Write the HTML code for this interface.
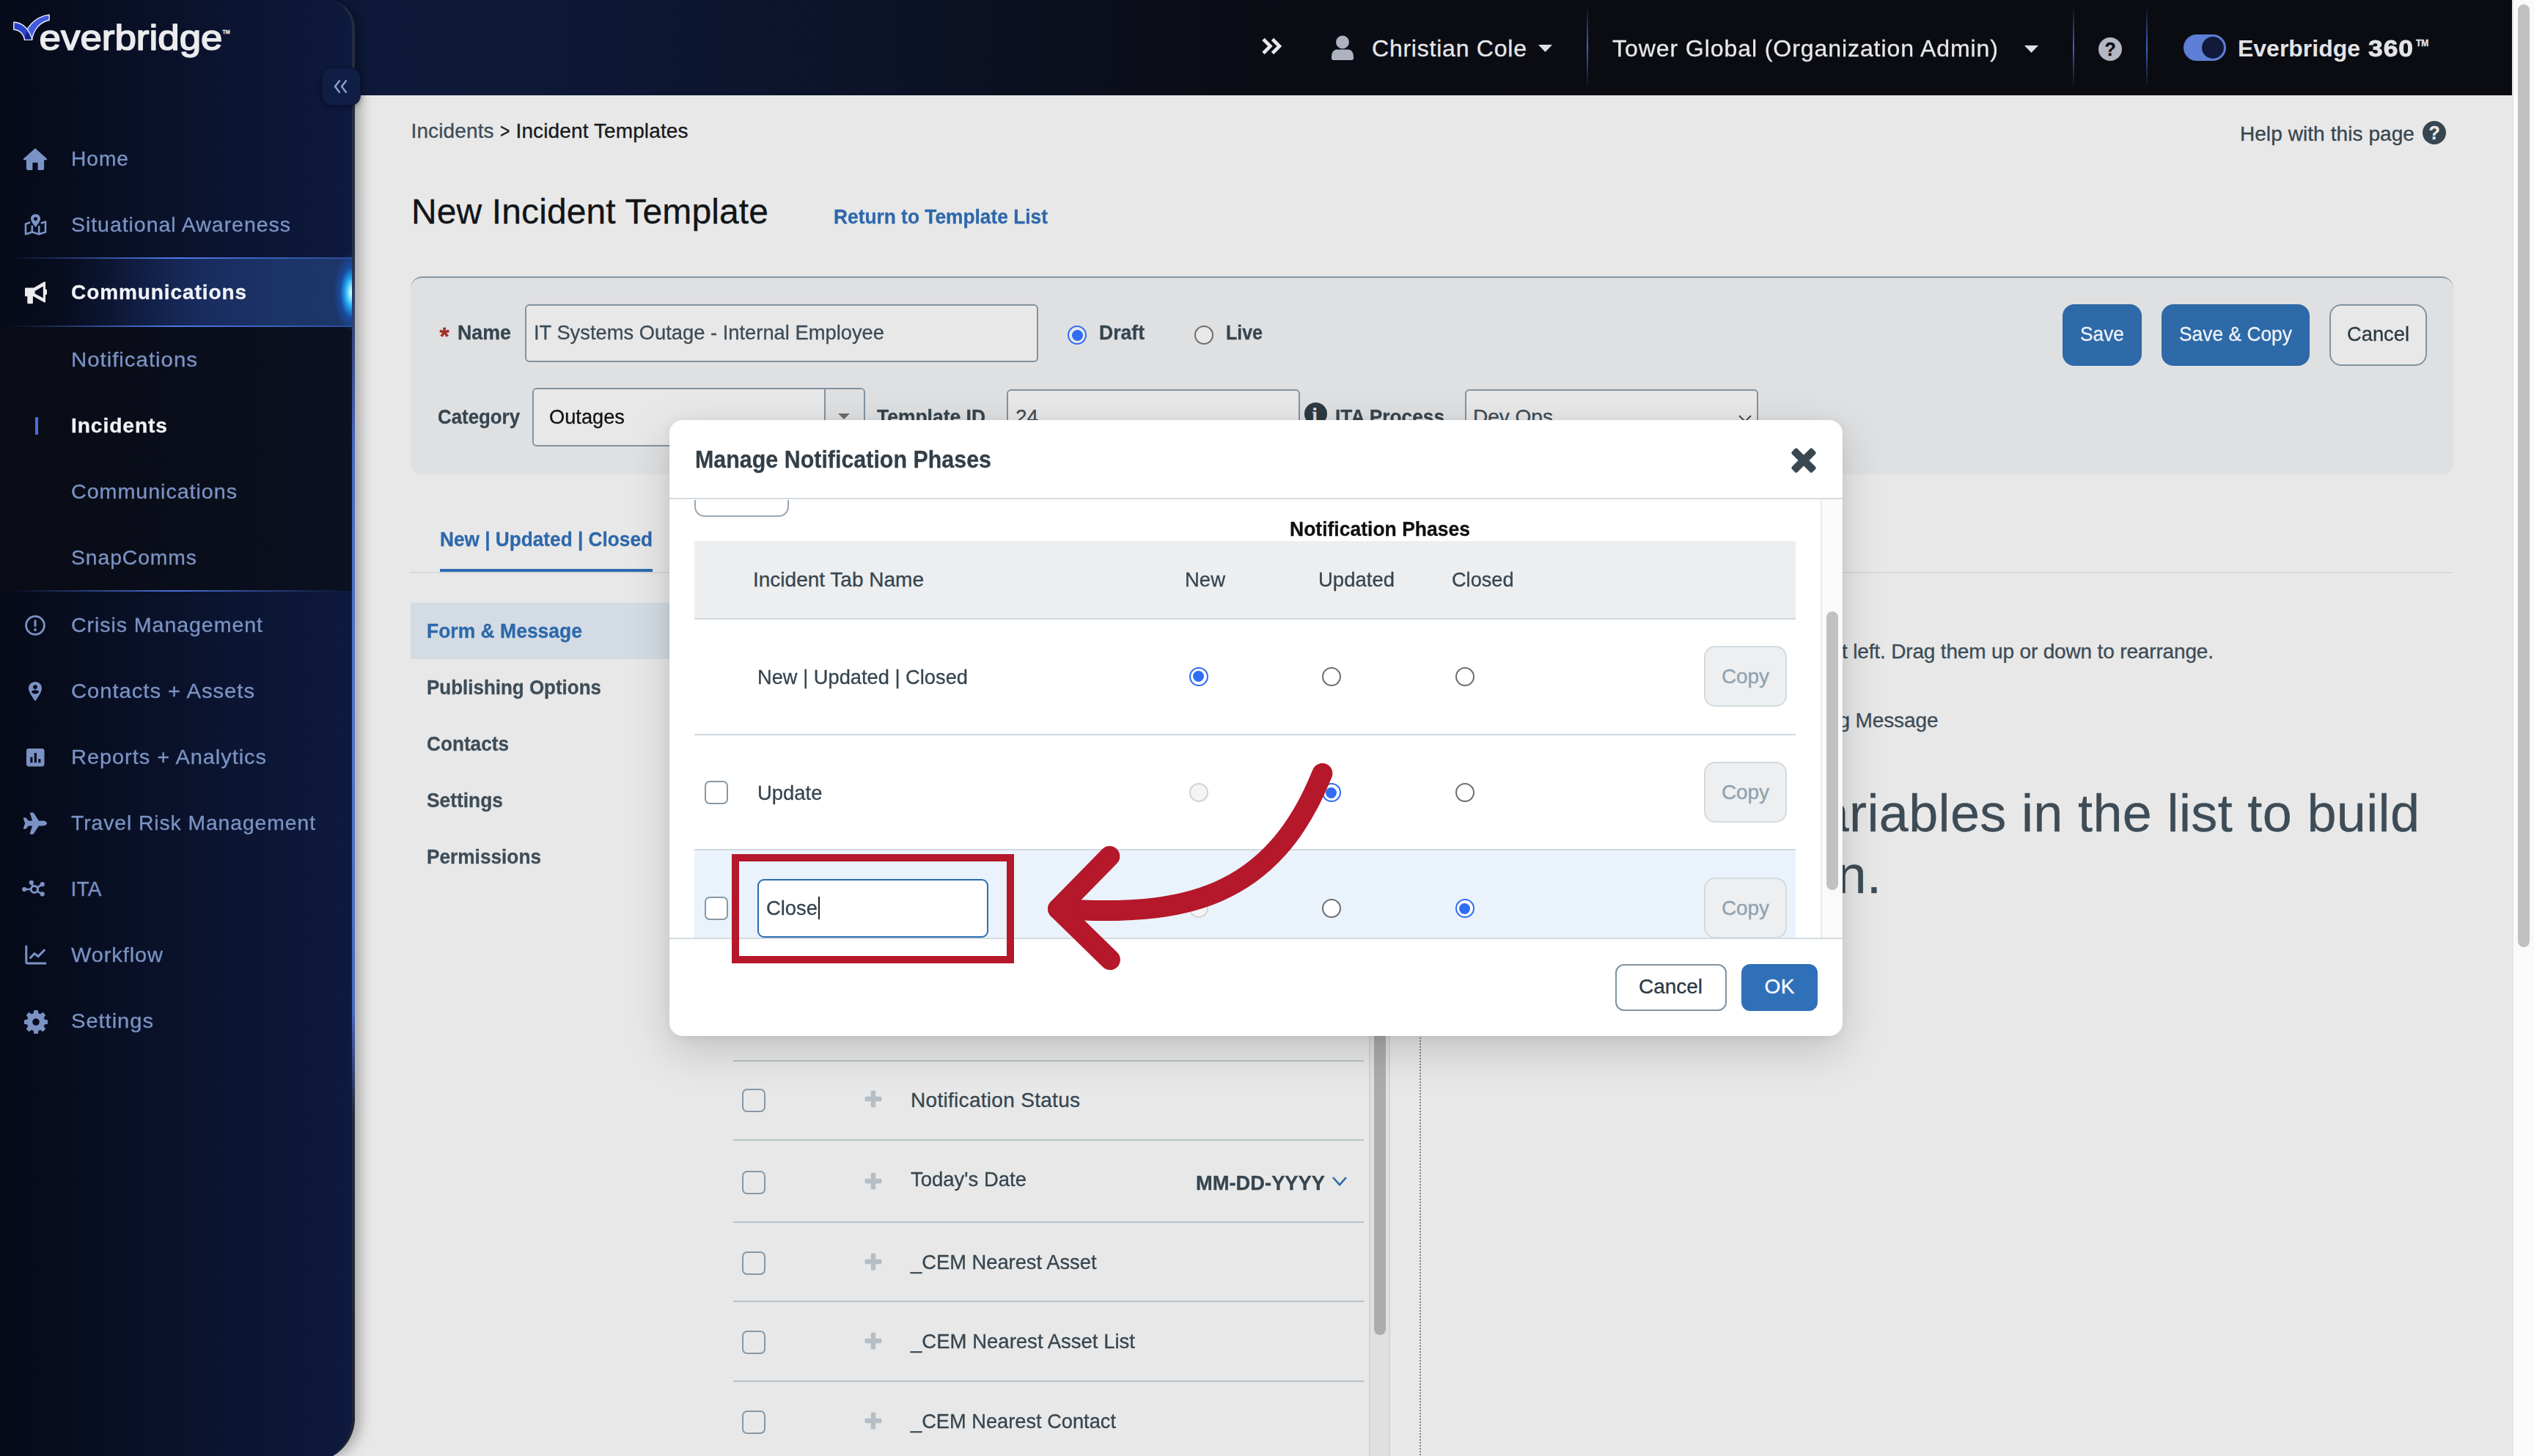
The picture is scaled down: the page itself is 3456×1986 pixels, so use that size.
<!DOCTYPE html>
<html lang="en"><head><meta charset="utf-8"><title>Incident Templates</title><style>
html{font-size:calc(100vw / 345.6);}
body{margin:0;background:#e8e8e8;overflow:hidden;font-family:"Liberation Sans",sans-serif;}
#root{position:relative;width:345.6rem;height:198.6rem;overflow:hidden;background:#e8e8e8;}
#root div,#root span,#root svg{position:absolute;box-sizing:border-box;}
#root span{white-space:nowrap;-webkit-text-stroke:0.03rem currentColor;}
</style></head><body><div id="root">
<span style="left: 56.05rem; top: 16.48rem; font-size: 2.8rem; line-height: 2.8rem; color: rgb(61, 76, 87); font-weight: 400; letter-spacing: 0.012rem;">Incidents</span>
<span style="left: 68.2rem; top: 16.48rem; font-size: 2.8rem; line-height: 2.8rem; color: rgb(22, 25, 28); font-weight: 400; transform-origin: 0rem 50%; transform: scaleX(0.8252);">&gt;</span>
<span style="left: 70.35rem; top: 16.48rem; font-size: 2.8rem; line-height: 2.8rem; color: rgb(22, 25, 28); font-weight: 400; letter-spacing: 0.012rem;">Incident Templates</span>
<span style="left: 305.49rem; top: 16.93rem; font-size: 2.8rem; line-height: 2.8rem; color: rgb(54, 69, 79); font-weight: 400; letter-spacing: 0.008rem;">Help with this page</span>
<div style="left:330.4rem;top:16.5rem;width:3.2rem;height:3.2rem;border-radius:50%;background:#36454f;"></div>
<span style="left:331.25rem;top:16.88rem;font-size:2.5rem;line-height:2.5rem;color:#e8e8e8;font-weight:700;">?</span>
<span style="left: 56.1rem; top: 26.49rem; font-size: 4.8rem; line-height: 4.8rem; color: rgb(17, 20, 23); font-weight: 400; letter-spacing: 0.011rem;">New Incident Template</span>
<span style="left: 113.7rem; top: 28.18rem; font-size: 2.8rem; line-height: 2.8rem; color: rgb(45, 104, 172); font-weight: 700; transform-origin: 0rem 50%; transform: scaleX(0.94);">Return to Template List</span>
<div style="left:56rem;top:37.7rem;width:278.6rem;height:27rem;background:#dfe0e2;border-radius:1.6rem;border-top:0.2rem solid #8596a3;"></div>
<span style="left:59.95rem;top:44.12rem;font-size:3.4rem;line-height:3.4rem;color:#a12a2a;font-weight:700;">*</span>
<span style="left: 62.4rem; top: 44.03rem; font-size: 2.8rem; line-height: 2.8rem; color: rgb(54, 69, 79); font-weight: 700; transform-origin: 0rem 50%; transform: scaleX(0.9572);">Name</span>
<div style="left:71.6rem;top:41.5rem;width:70rem;height:7.9rem;border:0.2rem solid #8293a0;border-radius:0.6rem;background:#e8e8e8;"></div>
<span style="left: 72.8rem; top: 44.03rem; font-size: 2.8rem; line-height: 2.8rem; color: rgb(61, 76, 87); font-weight: 400; transform-origin: 0rem 50%; transform: scaleX(0.9761);">IT Systems Outage - Internal Employee</span>
<div style="left:145.6rem;top:44.4rem;width:2.6rem;height:2.6rem;border-radius:50%;border:0.26rem solid #2f6df2;background:#e8e8e8;"></div>
<div style="left:146.15rem;top:44.95rem;width:1.5rem;height:1.5rem;border-radius:50%;background:#2f6df2;"></div>
<span style="left: 149.9rem; top: 44.03rem; font-size: 2.8rem; line-height: 2.8rem; color: rgb(54, 69, 79); font-weight: 700; transform-origin: 0rem 50%; transform: scaleX(0.9488);">Draft</span>
<div style="left:162.85rem;top:44.4rem;width:2.6rem;height:2.6rem;border-radius:50%;border:0.22rem solid #6e6e6e;background:#e8e8e8;"></div>
<span style="left: 167.2rem; top: 44.03rem; font-size: 2.8rem; line-height: 2.8rem; color: rgb(54, 69, 79); font-weight: 700; transform-origin: 0rem 50%; transform: scaleX(0.8924);">Live</span>
<div style="left:281.3rem;top:41.5rem;width:10.8rem;height:8.4rem;background:#2e69a8;border-radius:1.6rem;"></div>
<span style="left: 283.65rem; top: 44.23rem; font-size: 2.8rem; line-height: 2.8rem; color: rgb(238, 243, 248); font-weight: 400; transform-origin: 0rem 50%; transform: scaleX(0.94);">Save</span>
<div style="left:294.8rem;top:41.5rem;width:20.2rem;height:8.4rem;background:#2e69a8;border-radius:1.6rem;"></div>
<span style="left: 297.15rem; top: 44.23rem; font-size: 2.8rem; line-height: 2.8rem; color: rgb(238, 243, 248); font-weight: 400; transform-origin: 0rem 50%; transform: scaleX(0.9423);">Save &amp; Copy</span>
<div style="left:317.7rem;top:41.5rem;width:13.3rem;height:8.4rem;background:#e8e8e8;border:0.2rem solid #8293a0;border-radius:1.6rem;"></div>
<span style="left: 320.1rem; top: 44.23rem; font-size: 2.8rem; line-height: 2.8rem; color: rgb(43, 57, 66); font-weight: 400; transform-origin: 0rem 50%; transform: scaleX(0.9751);">Cancel</span>
<span style="left: 59.65rem; top: 55.53rem; font-size: 2.8rem; line-height: 2.8rem; color: rgb(54, 69, 79); font-weight: 700; transform-origin: 0rem 50%; transform: scaleX(0.9228);">Category</span>
<div style="left:72.6rem;top:52.9rem;width:45.4rem;height:8rem;border:0.2rem solid #8293a0;border-radius:0.6rem;background:#e8e8e8;"></div>
<div style="left:112.4rem;top:53.1rem;width:0.2rem;height:7.6rem;background:#8293a0;"></div>
<div style="left:112.6rem;top:53.1rem;width:5.2rem;height:7.6rem;background:#dfe0e2;border-radius:0 0.4rem 0.4rem 0;"></div>
<svg style="left:114.3rem;top:56.4rem;width:1.6rem;height:0.8rem;" viewBox="0 0 16 8"><path d="M0 0 L16 0 L8 8 Z" fill="#6b6b6b"></path></svg>
<span style="left: 74.85rem; top: 55.53rem; font-size: 2.8rem; line-height: 2.8rem; color: rgb(17, 17, 17); font-weight: 400; transform-origin: 0rem 50%; transform: scaleX(0.973);">Outages</span>
<span style="left: 119.6rem; top: 55.53rem; font-size: 2.8rem; line-height: 2.8rem; color: rgb(54, 69, 79); font-weight: 700; transform-origin: 0rem 50%; transform: scaleX(0.9449);">Template ID</span>
<div style="left:137.3rem;top:53.1rem;width:40rem;height:8rem;border:0.2rem solid #8293a0;border-radius:0.6rem;background:#e8e8e8;"></div>
<span style="left:138.5rem;top:55.53rem;font-size:2.8rem;line-height:2.8rem;color:#3d4c57;font-weight:400;">24</span>
<div style="left:177.9rem;top:54.9rem;width:3.1rem;height:3.1rem;border-radius:50%;background:#2b3942;"></div>
<span style="left:178.95rem;top:55.3rem;font-size:2.6rem;line-height:2.6rem;color:#dfe0e2;font-weight:700;font-family:'Liberation Serif',serif;">i</span>
<span style="left: 182.1rem; top: 55.53rem; font-size: 2.8rem; line-height: 2.8rem; color: rgb(54, 69, 79); font-weight: 700; transform-origin: 0rem 50%; transform: scaleX(0.9387);">ITA Process</span>
<div style="left:199.8rem;top:53.1rem;width:40rem;height:8rem;border:0.2rem solid #8293a0;border-radius:0.6rem;background:#e8e8e8;"></div>
<span style="left:200.9rem;top:55.53rem;font-size:2.8rem;line-height:2.8rem;color:#3d4c57;font-weight:400;">Dev Ops</span>
<svg style="left:237.1rem;top:56.6rem;width:1.8rem;height:1rem;" viewBox="0 0 18 10"><path d="M1 1 L9 9 L17 1" fill="none" stroke="#3d4c57" stroke-width="2"></path></svg>
<span style="left: 60rem; top: 72.23rem; font-size: 2.8rem; line-height: 2.8rem; color: rgb(45, 104, 172); font-weight: 700; transform-origin: 0rem 50%; transform: scaleX(0.9363);">New | Updated | Closed</span>
<div style="left:56rem;top:78rem;width:278.5rem;height:0.2rem;background:#d8d9da;"></div>
<div style="left:60rem;top:77.6rem;width:29rem;height:0.44rem;background:#2e6bb3;"></div>
<div style="left:56rem;top:82.2rem;width:40rem;height:7.7rem;background:#d3dce4;"></div>
<span style="left: 58.2rem; top: 84.73rem; font-size: 2.8rem; line-height: 2.8rem; color: rgb(45, 104, 172); font-weight: 700; transform-origin: 0rem 50%; transform: scaleX(0.9461);">Form &amp; Message</span>
<span style="left: 58.2rem; top: 92.43rem; font-size: 2.8rem; line-height: 2.8rem; color: rgb(62, 77, 88); font-weight: 700; transform-origin: 0rem 50%; transform: scaleX(0.9273);">Publishing Options</span>
<span style="left: 58.2rem; top: 100.13rem; font-size: 2.8rem; line-height: 2.8rem; color: rgb(62, 77, 88); font-weight: 700; transform-origin: 0rem 50%; transform: scaleX(0.9349);">Contacts</span>
<span style="left: 58.2rem; top: 107.83rem; font-size: 2.8rem; line-height: 2.8rem; color: rgb(62, 77, 88); font-weight: 700; transform-origin: 0rem 50%; transform: scaleX(0.9414);">Settings</span>
<span style="left: 58.2rem; top: 115.53rem; font-size: 2.8rem; line-height: 2.8rem; color: rgb(62, 77, 88); font-weight: 700; transform-origin: 0rem 50%; transform: scaleX(0.9368);">Permissions</span>
<span style="right: 43.7rem; top: 87.48rem; font-size: 2.8rem; line-height: 2.8rem; color: rgb(61, 76, 87); font-weight: 400; letter-spacing: -0.016rem; margin-right: 0.016rem;">Select variables from the list at left. Drag them up or down to rearrange.</span>
<span style="right: 81.25rem; top: 96.93rem; font-size: 2.8rem; line-height: 2.8rem; color: rgb(61, 76, 87); font-weight: 400; letter-spacing: -0.011rem; margin-right: 0.011rem;">Outgoing Message</span>
<span style="right: 15.6rem; top: 107.31rem; font-size: 7.2rem; line-height: 7.2rem; color: rgb(61, 76, 87); font-weight: 400; letter-spacing: 0.035rem; margin-right: -0.035rem;">Select variables in the list to build</span>
<span style="right:89rem;top:115.62rem;font-size:7.3rem;line-height:7.3rem;color:#3d4c57;">your notification.</span>
<div style="left:100rem;top:133.8rem;width:86rem;height:0.2rem;background:#b8c1c9;"></div>
<div style="left:100rem;top:144.6rem;width:86rem;height:0.2rem;background:#b8c1c9;"></div>
<div style="left:100rem;top:155.4rem;width:86rem;height:0.2rem;background:#b8c1c9;"></div>
<div style="left:100rem;top:166.6rem;width:86rem;height:0.2rem;background:#b8c1c9;"></div>
<div style="left:100rem;top:177.4rem;width:86rem;height:0.2rem;background:#b8c1c9;"></div>
<div style="left:100rem;top:188.3rem;width:86rem;height:0.2rem;background:#b8c1c9;"></div>
<div style="left:101.2rem;top:148.5rem;width:3.2rem;height:3.2rem;border:0.2rem solid #8798a6;border-radius:0.7rem;background:#e8e8e8;"></div>
<svg style="left:117.85rem;top:148.7rem;width:2.4rem;height:2.4rem;" viewBox="0 0 24 24"><g fill="#b3bec7"><rect x="8.8" y="0.5" width="6.4" height="23" rx="1.6"></rect><rect x="0.5" y="8.8" width="23" height="6.4" rx="1.6"></rect></g></svg>
<span style="left: 124.2rem; top: 148.68rem; font-size: 2.8rem; line-height: 2.8rem; color: rgb(54, 69, 79); font-weight: 400; letter-spacing: 0.03rem;">Notification Status</span>
<div style="left:101.2rem;top:159.65rem;width:3.2rem;height:3.2rem;border:0.2rem solid #8798a6;border-radius:0.7rem;background:#e8e8e8;"></div>
<svg style="left:117.85rem;top:159.85rem;width:2.4rem;height:2.4rem;" viewBox="0 0 24 24"><g fill="#b3bec7"><rect x="8.8" y="0.5" width="6.4" height="23" rx="1.6"></rect><rect x="0.5" y="8.8" width="23" height="6.4" rx="1.6"></rect></g></svg>
<span style="left: 124.2rem; top: 159.53rem; font-size: 2.8rem; line-height: 2.8rem; color: rgb(54, 69, 79); font-weight: 400; transform-origin: 0rem 50%; transform: scaleX(0.9814);">Today's Date</span>
<div style="left:101.2rem;top:170.7rem;width:3.2rem;height:3.2rem;border:0.2rem solid #8798a6;border-radius:0.7rem;background:#e8e8e8;"></div>
<svg style="left:117.85rem;top:170.9rem;width:2.4rem;height:2.4rem;" viewBox="0 0 24 24"><g fill="#b3bec7"><rect x="8.8" y="0.5" width="6.4" height="23" rx="1.6"></rect><rect x="0.5" y="8.8" width="23" height="6.4" rx="1.6"></rect></g></svg>
<span style="left: 124.2rem; top: 170.83rem; font-size: 2.8rem; line-height: 2.8rem; color: rgb(54, 69, 79); font-weight: 400; transform-origin: 0rem 50%; transform: scaleX(0.9755);">_CEM Nearest Asset</span>
<div style="left:101.2rem;top:181.45rem;width:3.2rem;height:3.2rem;border:0.2rem solid #8798a6;border-radius:0.7rem;background:#e8e8e8;"></div>
<svg style="left:117.85rem;top:181.65rem;width:2.4rem;height:2.4rem;" viewBox="0 0 24 24"><g fill="#b3bec7"><rect x="8.8" y="0.5" width="6.4" height="23" rx="1.6"></rect><rect x="0.5" y="8.8" width="23" height="6.4" rx="1.6"></rect></g></svg>
<span style="left: 124.2rem; top: 181.63rem; font-size: 2.8rem; line-height: 2.8rem; color: rgb(54, 69, 79); font-weight: 400; transform-origin: 0rem 50%; transform: scaleX(0.9832);">_CEM Nearest Asset List</span>
<div style="left:101.2rem;top:192.4rem;width:3.2rem;height:3.2rem;border:0.2rem solid #8798a6;border-radius:0.7rem;background:#e8e8e8;"></div>
<svg style="left:117.85rem;top:192.6rem;width:2.4rem;height:2.4rem;" viewBox="0 0 24 24"><g fill="#b3bec7"><rect x="8.8" y="0.5" width="6.4" height="23" rx="1.6"></rect><rect x="0.5" y="8.8" width="23" height="6.4" rx="1.6"></rect></g></svg>
<span style="left: 124.2rem; top: 192.5rem; font-size: 2.8rem; line-height: 2.8rem; color: rgb(54, 69, 79); font-weight: 400; transform-origin: 0rem 50%; transform: scaleX(0.9726);">_CEM Nearest Contact</span>
<span style="left: 163.1rem; top: 160rem; font-size: 2.8rem; line-height: 2.8rem; color: rgb(54, 69, 79); font-weight: 700; transform-origin: 0rem 50%; transform: scaleX(0.9753);">MM-DD-YYYY</span>
<svg style="left:181.7rem;top:160.5rem;width:2rem;height:1.3rem;" viewBox="0 0 20 13"><path d="M1 1 L10 11 L19 1" fill="none" stroke="#2d68ac" stroke-width="2.6"></path></svg>
<div style="left:186.7rem;top:130rem;width:2.9rem;height:70rem;background:#e0e0e0;border-left:0.2rem solid #d4d4d4;border-right:0.2rem solid #d4d4d4;"></div>
<div style="left:187.4rem;top:130rem;width:1.6rem;height:52.1rem;background:#acacac;border-radius:0.8rem;"></div>
<div style="left:193.6rem;top:130rem;width:0rem;height:70rem;border-left:0.2rem dotted #7a848c;"></div>
<div style="left:0rem;top:0rem;width:342.6rem;height:13rem;background:linear-gradient(90deg,#0e1a3c 0rem,#0e1938 70rem,#0c1226 125rem,#0b0d16 165rem,#0b0c12 220rem);"></div>
<div style="left:342.6rem;top:0rem;width:3rem;height:198.6rem;background:#fafafa;border-left:0.2rem solid #e4e4e4;"></div>
<div style="left:343.4rem;top:0.6rem;width:1.6rem;height:128.6rem;background:#c1c1c1;border-radius:0.8rem;"></div>
<svg style="left:172rem;top:5.1rem;width:3rem;height:2.4rem;" viewBox="0 0 30 24"><path d="M3 2.5 L12.5 12 L3 21.5 M15.5 2.5 L25 12 L15.5 21.5" fill="none" stroke="#e9e9ec" stroke-width="4.6" stroke-linejoin="miter"></path></svg>
<svg style="left:181.6rem;top:4.8rem;width:3rem;height:3.4rem;" viewBox="0 0 30 34"><circle cx="15" cy="9.5" r="9" fill="#aeb3c0"></circle><path d="M0 30 C0 22 4 19.5 8 19.5 L22 19.5 C26 19.5 30 22 30 30 L30 31.5 C30 33 29 34 27.5 34 L2.5 34 C1 34 0 33 0 31.5 Z" fill="#aeb3c0"></path></svg>
<span style="left: 187.1rem; top: 5.04rem; font-size: 3.2rem; line-height: 3.2rem; color: rgb(230, 231, 234); font-weight: 400; letter-spacing: 0.077rem;">Christian Cole</span>
<svg style="left:209.8rem;top:6.1rem;width:1.9rem;height:1rem;" viewBox="0 0 19 10"><path d="M0 0 L19 0 L9.5 10 Z" fill="#dfe0e4"></path></svg>
<div style="left:216.4rem;top:0.8rem;width:0.2rem;height:11.2rem;background:linear-gradient(180deg,rgba(58,95,192,0),#3f63c4 50%,rgba(58,95,192,0));"></div>
<span style="left: 219.9rem; top: 4.99rem; font-size: 3.2rem; line-height: 3.2rem; color: rgb(230, 231, 234); font-weight: 400; letter-spacing: 0.09rem; transform-origin: 0rem 50%; transform: scaleX(1.0019);">Tower Global (Organization Admin)</span>
<svg style="left:276.1rem;top:6.2rem;width:1.9rem;height:1rem;" viewBox="0 0 19 10"><path d="M0 0 L19 0 L9.5 10 Z" fill="#dfe0e4"></path></svg>
<div style="left:282.7rem;top:0.8rem;width:0.2rem;height:11.2rem;background:linear-gradient(180deg,rgba(58,95,192,0),#3f63c4 50%,rgba(58,95,192,0));"></div>
<div style="left:286.2rem;top:5.1rem;width:3.2rem;height:3.2rem;border-radius:50%;background:#b3b7c3;"></div>
<span style="left:287.05rem;top:5.48rem;font-size:2.5rem;line-height:2.5rem;color:#0b0c12;font-weight:700;">?</span>
<div style="left:292.7rem;top:0.8rem;width:0.2rem;height:11.2rem;background:linear-gradient(180deg,rgba(58,95,192,0),#3f63c4 50%,rgba(58,95,192,0));"></div>
<div style="left:297.8rem;top:4.7rem;width:5.8rem;height:3.6rem;background:#5e7fd6;border-radius:1.8rem;"></div>
<div style="left:300.3rem;top:5rem;width:3rem;height:3rem;background:#111a3a;border-radius:50%;"></div>
<span style="left: 305.2rem; top: 5.04rem; font-size: 3.2rem; line-height: 3.2rem; color: rgb(227, 228, 232); font-weight: 700; -webkit-text-stroke: 0rem; letter-spacing: -0.002rem;">Everbridge</span>
<span style="left: 323rem; top: 5.04rem; font-size: 3.2rem; line-height: 3.2rem; color: rgb(227, 228, 232); font-weight: 700; -webkit-text-stroke: 0.09rem currentcolor; letter-spacing: 0.09rem; transform-origin: 0rem 50%; transform: scaleX(1.1053);">360</span>
<span style="left:329.5rem;top:5.28rem;font-size:1.2rem;line-height:1.2rem;color:#e3e4e8;font-weight:700;">TM</span>
<div style="left:0rem;top:0rem;width:48.4rem;height:199.4rem;background:linear-gradient(90deg,#060a18 0%,#0e1a3e 100%);border-radius:0 3.8rem 6rem 0;box-shadow:0.8rem 0 1.8rem rgba(0,0,0,.28);"></div>
<div style="left:0rem;top:0rem;width:48.4rem;height:199.4rem;border-radius:0 3.8rem 6rem 0;border-right:0.4rem solid transparent;background:linear-gradient(180deg,#252c3c 0%,#262e44 17%,#4a68c4 31%,#5673cc 50%,#4a68c4 69%,#252c40 76%,#20242e 100%) border-box;-webkit-mask:linear-gradient(#000 0 0) padding-box,linear-gradient(#000 0 0);-webkit-mask-composite:xor;mask-composite:exclude;"></div>
<div style="left:0rem;top:44.5rem;width:48rem;height:36.1rem;background:linear-gradient(90deg,#090c15 0%,#0a0e1b 60%,#0b1122 100%);"></div>
<div style="left:0rem;top:80.5rem;width:48rem;height:0.2rem;background:linear-gradient(90deg,rgba(74,120,224,0) 2%,#4a70d8 50%,rgba(74,120,224,0) 98%);"></div>
<div style="left:0rem;top:35.2rem;width:48rem;height:9.3rem;background:linear-gradient(90deg,rgba(26,47,102,0) 0%,rgba(26,47,102,0) 18%,rgba(26,47,102,.2) 30%,rgba(28,50,108,.78) 56%,#1c3467 80%,#1e3769 100%);"></div>
<div style="left:0rem;top:35.1rem;width:48rem;height:0.2rem;background:linear-gradient(90deg,rgba(74,120,224,0) 2%,#4f7ae6 50%,#2c4a96 100%);"></div>
<div style="left:0rem;top:44.4rem;width:48rem;height:0.2rem;background:linear-gradient(90deg,rgba(74,120,224,0) 2%,#4f7ae6 50%,#2c4a96 100%);"></div>
<div style="left:43rem;top:33.5rem;width:5rem;height:12.8rem;background:radial-gradient(ellipse 2.5rem 5.4rem at 100% 50%,#e6ffff 0%,#8fe8ff 16%,#1fa4f0 38%,rgba(20,96,214,.5) 64%,rgba(33,58,124,0) 100%);"></div>
<svg style="left:1.4rem;top:1.6rem;width:6rem;height:4.4rem;" viewBox="14 16 60 44"><g stroke="#eef0f4" stroke-width="1.4" stroke-linejoin="round"><path d="M33.5 54.4 C34 38 47 23 67.1 20.1 L67.1 27.5 C54 30 45.5 41 43.6 54.4 Z" fill="#3f5be0"></path><path d="M18.8 30.2 C30 30.5 41 40 43.6 54.4 L33.5 54.4 C32.5 47 27 41 18.8 40.3 Z" fill="#2a44d0"></path></g><path d="M34.2 53.7 C34.3 50 35 46.8 36.6 43.6 C39.8 46.4 42 50 42.9 53.7 Z" fill="#14228c"></path></svg>
<svg style="left:5rem;top:2.2rem;width:27rem;height:6.4rem;" viewBox="0 0 270 64"><text x="3.5" y="45.7" font-family="Liberation Sans, sans-serif" font-size="49" fill="#ececee" textLength="250" lengthAdjust="spacingAndGlyphs" stroke="#ececee" stroke-width="1.6" stroke-linejoin="round">everbridge</text></svg>
<span style="left:30.35rem;top:3.96rem;font-size:0.7rem;line-height:0.7rem;color:#ececee;font-weight:700;">TM</span>
<div style="left:44rem;top:9.3rem;width:5.1rem;height:5rem;background:#101e45;border-radius:1.3rem;box-shadow:0 0 0 0.1rem rgba(12,20,46,.9),0 0.2rem 0.8rem rgba(0,0,0,.45);"></div>
<svg style="left:45.5rem;top:10.8rem;width:2rem;height:2rem;" viewBox="0 0 20 20"><path d="M8.5 1.5 L2 10 L8.5 18.5 M17.5 1.5 L11 10 L17.5 18.5" fill="none" stroke="#8aa0cc" stroke-width="2.4"></path></svg>
<span style="left: 9.65rem; top: 20.33rem; font-size: 2.8rem; line-height: 2.8rem; color: rgb(123, 147, 196); font-weight: 400; letter-spacing: 0.09rem; transform-origin: 0rem 50%; transform: scaleX(1.0077);">Home</span>
<span style="left: 9.65rem; top: 29.33rem; font-size: 2.8rem; line-height: 2.8rem; color: rgb(123, 147, 196); font-weight: 400; letter-spacing: 0.09rem; transform-origin: 0rem 50%; transform: scaleX(1.0205);">Situational Awareness</span>
<span style="left: 9.65rem; top: 38.53rem; font-size: 2.8rem; line-height: 2.8rem; color: rgb(242, 243, 247); font-weight: 700; letter-spacing: 0.09rem; transform-origin: 0rem 50%; transform: scaleX(1.0007);">Communications</span>
<span style="left: 9.65rem; top: 47.73rem; font-size: 2.8rem; line-height: 2.8rem; color: rgb(123, 147, 196); font-weight: 400; letter-spacing: 0.09rem; transform-origin: 0rem 50%; transform: scaleX(1.0532);">Notifications</span>
<span style="left: 9.65rem; top: 56.73rem; font-size: 2.8rem; line-height: 2.8rem; color: rgb(242, 243, 247); font-weight: 700; letter-spacing: 0.09rem; transform-origin: 0rem 50%; transform: scaleX(1.0067);">Incidents</span>
<span style="left: 9.65rem; top: 65.73rem; font-size: 2.8rem; line-height: 2.8rem; color: rgb(123, 147, 196); font-weight: 400; letter-spacing: 0.09rem; transform-origin: 0rem 50%; transform: scaleX(1.0262);">Communications</span>
<span style="left: 9.65rem; top: 74.73rem; font-size: 2.8rem; line-height: 2.8rem; color: rgb(123, 147, 196); font-weight: 400; letter-spacing: 0.09rem; transform-origin: 0rem 50%; transform: scaleX(1.0116);">SnapComms</span>
<span style="left: 9.65rem; top: 83.93rem; font-size: 2.8rem; line-height: 2.8rem; color: rgb(123, 147, 196); font-weight: 400; letter-spacing: 0.09rem; transform-origin: 0rem 50%; transform: scaleX(1.0211);">Crisis Management</span>
<span style="left: 9.65rem; top: 92.93rem; font-size: 2.8rem; line-height: 2.8rem; color: rgb(123, 147, 196); font-weight: 400; letter-spacing: 0.09rem; transform-origin: 0rem 50%; transform: scaleX(1.0448);">Contacts + Assets</span>
<span style="left: 9.65rem; top: 101.93rem; font-size: 2.8rem; line-height: 2.8rem; color: rgb(123, 147, 196); font-weight: 400; letter-spacing: 0.09rem; transform-origin: 0rem 50%; transform: scaleX(1.0364);">Reports + Analytics</span>
<span style="left: 9.65rem; top: 110.93rem; font-size: 2.8rem; line-height: 2.8rem; color: rgb(123, 147, 196); font-weight: 400; letter-spacing: 0.09rem; transform-origin: 0rem 50%; transform: scaleX(1.0119);">Travel Risk Management</span>
<span style="left: 9.65rem; top: 119.93rem; font-size: 2.8rem; line-height: 2.8rem; color: rgb(123, 147, 196); font-weight: 400; letter-spacing: 0.026rem;">ITA</span>
<span style="left: 9.65rem; top: 128.93rem; font-size: 2.8rem; line-height: 2.8rem; color: rgb(123, 147, 196); font-weight: 400; letter-spacing: 0.09rem; transform-origin: 0rem 50%; transform: scaleX(1.0337);">Workflow</span>
<span style="left: 9.65rem; top: 137.93rem; font-size: 2.8rem; line-height: 2.8rem; color: rgb(123, 147, 196); font-weight: 400; letter-spacing: 0.09rem; transform-origin: 0rem 50%; transform: scaleX(1.0421);">Settings</span>
<div style="left:4.8rem;top:56.9rem;width:0.4rem;height:2.4rem;background:#4a6fe0;border-radius:0.1rem;"></div>
<svg style="left:3.1rem;top:20rem;width:3.4rem;height:3.4rem;" viewBox="0 0 32 32"><g fill="#7b93c4" stroke="none"><path d="M16 2.2 L1.2 15.2 C0.4 16 0.9 17.2 2 17.2 L4.6 17.2 L4.6 28 C4.6 29.2 5.4 30 6.6 30 L12.6 30 L12.6 21.5 C12.6 20.9 13 20.5 13.6 20.5 L18.4 20.5 C19 20.5 19.4 20.9 19.4 21.5 L19.4 30 L25.4 30 C26.6 30 27.4 29.2 27.4 28 L27.4 17.2 L30 17.2 C31.1 17.2 31.6 16 30.8 15.2 Z"></path></g></svg>
<svg style="left:3.3rem;top:29.1rem;width:3.1rem;height:3.1rem;" viewBox="0 0 31 31"><g fill="none" stroke="#7b93c4" stroke-width="2.6" stroke-linejoin="round"><path d="M8.2 12.2 L2 14.4 L2 28.4 L10.8 25.4 L20.2 28.4 L29 25.4 L29 11.4 L22.8 13.4"></path><path d="M10.8 16.5 L10.8 25.4 M20.2 17 L20.2 28.4"></path></g><path fill="#7b93c4" fill-rule="evenodd" d="M15.5 1 C11.8 1 9 3.8 9 7.3 C9 11.2 13.6 16.6 15 18.2 C15.3 18.5 15.7 18.5 16 18.2 C17.4 16.6 22 11.2 22 7.3 C22 3.8 19.2 1 15.5 1 Z M15.5 4.9 A2.5 2.5 0 1 1 15.5 9.9 A2.5 2.5 0 0 1 15.5 4.9 Z"></path></svg>
<svg style="left:3rem;top:38rem;width:3.6rem;height:3.8rem;" viewBox="30 380 36 38"><g fill="#ececee"><path d="M35 392.6 H46 V404.2 H44.9 V413 C44.9 413.8 44.4 414.3 43.6 414.3 H38.6 C37.8 414.3 37.3 413.8 37.3 413 V404.2 H35 C34.4 404.2 34 403.8 34 403.2 V393.6 C34 393 34.4 392.6 35 392.6 Z"></path><path fill-rule="evenodd" d="M44.4 393.4 L60.4 384.3 C61.2 383.9 62 384.3 62 385.2 V411.6 C62 412.5 61.2 412.9 60.4 412.5 L44.4 403.4 Z M47.6 396.9 V400.4 L58.8 406.6 V390.6 Z"></path><rect x="61.4" y="394.6" width="2.6" height="7.4" rx="1.3"></rect></g></svg>
<svg style="left:3.3rem;top:83.8rem;width:3rem;height:3rem;" viewBox="0 0 30 30"><circle cx="15" cy="15" r="12.4" fill="none" stroke="#7b93c4" stroke-width="2.8"></circle><rect x="13.5" y="7.6" width="3" height="9.4" rx="1.2" fill="#7b93c4"></rect><circle cx="15" cy="21" r="1.9" fill="#7b93c4"></circle></svg>
<svg style="left:3.3rem;top:92.75rem;width:3rem;height:3rem;" viewBox="0 0 32 32"><g fill="#7b93c4" stroke="none"><path fill-rule="evenodd" d="M16 2 C10.6 2 6.4 6.1 6.4 11.4 C6.4 17.4 13 25.8 15.2 29.4 C15.6 30 16.4 30 16.8 29.4 C19 25.8 25.6 17.4 25.6 11.4 C25.6 6.1 21.4 2 16 2 Z M16 6.6 A3.1 3.1 0 1 1 16 12.8 A3.1 3.1 0 0 1 16 6.6 Z M10.4 16.6 C11.4 14.9 13.6 14.2 16 14.2 C18.4 14.2 20.6 14.9 21.6 16.6 C20.4 19 18.3 19.8 16 19.8 C13.7 19.8 11.6 19 10.4 16.6 Z"></path></g></svg>
<svg style="left:3.6rem;top:102.1rem;width:2.45rem;height:2.45rem;" viewBox="0 0 25 25"><path fill="#7b93c4" fill-rule="evenodd" d="M3 0 L22 0 C23.7 0 25 1.3 25 3 L25 22 C25 23.7 23.7 25 22 25 L3 25 C1.3 25 0 23.7 0 22 L0 3 C0 1.3 1.3 0 3 0 Z M5.4 12 L5.4 19.6 L8.6 19.6 L8.6 12 Z M11 6 L11 19.6 L14.2 19.6 L14.2 6 Z M16.6 14.6 L16.6 19.6 L19.8 19.6 L19.8 14.6 Z"></path></svg>
<svg style="left:3.1rem;top:110.6rem;width:3.4rem;height:3.4rem;" viewBox="0 0 32 32"><g fill="#7b93c4" stroke="none"><path d="M31 16 C31 17.8 28.4 19.2 26.2 19.2 L20.6 19.2 L14.2 29.2 C13.9 29.7 13.4 30 12.8 30 L10.2 30 C9.5 30 9.1 29.4 9.3 28.8 L12.4 19.2 L7.4 19.2 L4.6 22.6 C4.3 23 3.9 23.2 3.4 23.2 L1.7 23.2 C1.1 23.2 0.7 22.6 0.9 22 L3 16 L0.9 10 C0.7 9.4 1.1 8.8 1.7 8.8 L3.4 8.8 C3.9 8.8 4.3 9 4.6 9.4 L7.4 12.8 L12.4 12.8 L9.3 3.2 C9.1 2.6 9.5 2 10.2 2 L12.8 2 C13.4 2 13.9 2.3 14.2 2.8 L20.6 12.8 L26.2 12.8 C28.4 12.8 31 14.2 31 16 Z"></path></g></svg>
<svg style="left:2.8rem;top:119.8rem;width:3.6rem;height:3rem;" viewBox="0 0 36 30"><g stroke="#7b93c4" stroke-width="2.6" fill="none"><circle cx="18.9" cy="15" r="4.6" stroke-width="3"></circle><path d="M14.4 15 L5.2 15 M16.9 10.9 L14.8 5.8 M23 12.6 L29.7 8.2 M22.8 17.8 L29.7 21.4"></path></g><g fill="#7b93c4"><circle cx="5.2" cy="15" r="3.1"></circle><circle cx="14.8" cy="5.8" r="3.1"></circle><circle cx="29.7" cy="8.2" r="3.1"></circle><circle cx="29.7" cy="21.4" r="3.1"></circle></g></svg>
<svg style="left:3.4rem;top:128.9rem;width:3rem;height:2.7rem;" viewBox="0 0 30 27"><g stroke="#7b93c4" stroke-width="3" fill="none" stroke-linecap="round" stroke-linejoin="round"><path d="M1.8 1.8 L1.8 23 C1.8 24.2 2.6 25 3.8 25 L28 25"></path><path d="M7.5 17.5 L13 11.6 L18 15.6 L26.5 7"></path></g></svg>
<svg style="left:3.26rem;top:137.77rem;width:3.2rem;height:3.2rem;" viewBox="0 0 32 32"><path fill="#7b93c4" stroke="#7b93c4" stroke-width="1.2" stroke-linejoin="round" fill-rule="evenodd" d="M13.16 4.55 L13.80 0.56 L18.20 0.56 L18.84 4.55 L22.09 5.89 L25.37 3.52 L28.48 6.63 L26.11 9.91 L27.45 13.16 L31.44 13.80 L31.44 18.20 L27.45 18.84 L26.11 22.09 L28.48 25.37 L25.37 28.48 L22.09 26.11 L18.84 27.45 L18.20 31.44 L13.80 31.44 L13.16 27.45 L9.91 26.11 L6.63 28.48 L3.52 25.37 L5.89 22.09 L4.55 18.84 L0.56 18.20 L0.56 13.80 L4.55 13.16 L5.89 9.91 L3.52 6.63 L6.63 3.52 L9.91 5.89 Z M10.60 16.00 A5.4 5.4 0 1 0 21.40 16.00 A5.4 5.4 0 1 0 10.60 16.00 Z"></path></svg>
<div style="left:91.3rem;top:57.3rem;width:160rem;height:84rem;background:#fff;border-radius:1.8rem;box-shadow:0 2rem 6rem rgba(0,0,0,.17),0 0.2rem 1.4rem rgba(0,0,0,.06);"></div>
<span style="left: 94.8rem; top: 60.98rem; font-size: 3.3rem; line-height: 3.3rem; color: rgb(51, 63, 72); font-weight: 700; transform-origin: 0rem 50%; transform: scaleX(0.9218);">Manage Notification Phases</span>
<svg style="left:243.95rem;top:60.78rem;width:4rem;height:4rem;" viewBox="0 0 40 40"><g fill="#3a4750"><rect x="0.25" y="14.8" width="39.5" height="10.4" rx="2.4" transform="rotate(45 20 20)"></rect><rect x="0.25" y="14.8" width="39.5" height="10.4" rx="2.4" transform="rotate(-45 20 20)"></rect></g></svg>
<div style="left:91.3rem;top:67.9rem;width:160rem;height:0.2rem;background:#d3dbe0;"></div>
<div style="left:248.3rem;top:68.1rem;width:3rem;height:59.8rem;background:#fafafa;border-left:0.2rem solid #e9e9e9;"></div>
<div style="left:249.1rem;top:83.4rem;width:1.6rem;height:38rem;background:#c1c1c1;border-radius:0.8rem;"></div>
<div style="left:94.7rem;top:66.1rem;width:12.9rem;height:4.4rem;border:0.2rem solid #98a7b3;border-radius:1.4rem;background:#fff;clip-path:inset(2.1rem 0 0 0);"></div>
<span style="left: 175.9rem; top: 70.78rem; font-size: 2.8rem; line-height: 2.8rem; color: rgb(13, 15, 17); font-weight: 700; transform-origin: 0rem 50%; transform: scaleX(0.9467);">Notification Phases</span>
<div style="left:94.7rem;top:73.8rem;width:150.2rem;height:10.7rem;background:#edeef0;border-bottom:0.2rem solid #cfd8de;"></div>
<span style="left: 102.7rem; top: 77.68rem; font-size: 2.8rem; line-height: 2.8rem; color: rgb(54, 69, 79); font-weight: 400; letter-spacing: 0rem;">Incident Tab Name</span>
<span style="left: 161.6rem; top: 77.68rem; font-size: 2.8rem; line-height: 2.8rem; color: rgb(54, 69, 79); font-weight: 400; transform-origin: 0rem 50%; transform: scaleX(0.9819);">New</span>
<span style="left: 179.8rem; top: 77.68rem; font-size: 2.8rem; line-height: 2.8rem; color: rgb(54, 69, 79); font-weight: 400; transform-origin: 0rem 50%; transform: scaleX(0.9823);">Updated</span>
<span style="left: 197.95rem; top: 77.68rem; font-size: 2.8rem; line-height: 2.8rem; color: rgb(54, 69, 79); font-weight: 400; transform-origin: 0rem 50%; transform: scaleX(0.9693);">Closed</span>
<div style="left:94.7rem;top:116rem;width:150.2rem;height:12rem;background:#eaf3fc;"></div>
<div style="left:94.7rem;top:100.1rem;width:150.2rem;height:0.2rem;background:#cfd8de;"></div>
<div style="left:94.7rem;top:115.8rem;width:150.2rem;height:0.2rem;background:#cfd8de;"></div>
<span style="left: 103.3rem; top: 91.03rem; font-size: 2.8rem; line-height: 2.8rem; color: rgb(54, 69, 79); font-weight: 400; transform-origin: 0rem 50%; transform: scaleX(0.9739);">New | Updated | Closed</span>
<div style="left:162.15rem;top:90.95rem;width:2.6rem;height:2.6rem;border-radius:50%;border:0.26rem solid #2f6df2;background:#fff;"></div>
<div style="left:162.7rem;top:91.5rem;width:1.5rem;height:1.5rem;border-radius:50%;background:#2f6df2;"></div>
<div style="left:180.25rem;top:90.95rem;width:2.6rem;height:2.6rem;border-radius:50%;border:0.22rem solid #6e6e6e;background:#fff;"></div>
<div style="left:198.45rem;top:90.95rem;width:2.6rem;height:2.6rem;border-radius:50%;border:0.22rem solid #6e6e6e;background:#fff;"></div>
<div style="left:232.4rem;top:88.1rem;width:11.3rem;height:8.3rem;background:#edeff1;border:0.2rem solid #d3dbe0;border-radius:1.5rem;"></div>
<span style="left: 234.8rem; top: 90.88rem; font-size: 2.8rem; line-height: 2.8rem; color: rgb(143, 162, 175); font-weight: 400; letter-spacing: -0.013rem;">Copy</span>
<div style="left:96.1rem;top:106.5rem;width:3.2rem;height:3.2rem;border:0.2rem solid #8798a6;border-radius:0.7rem;background:#fff;"></div>
<span style="left: 103.3rem; top: 106.78rem; font-size: 2.8rem; line-height: 2.8rem; color: rgb(54, 69, 79); font-weight: 400; transform-origin: 0rem 50%; transform: scaleX(0.9801);">Update</span>
<div style="left:162.15rem;top:106.8rem;width:2.6rem;height:2.6rem;border-radius:50%;border:0.2rem solid #d2d2d2;background:#f4f4f4;"></div>
<div style="left:180.25rem;top:106.8rem;width:2.6rem;height:2.6rem;border-radius:50%;border:0.26rem solid #2f6df2;background:#fff;"></div>
<div style="left:180.8rem;top:107.35rem;width:1.5rem;height:1.5rem;border-radius:50%;background:#2f6df2;"></div>
<div style="left:198.45rem;top:106.8rem;width:2.6rem;height:2.6rem;border-radius:50%;border:0.22rem solid #6e6e6e;background:#fff;"></div>
<div style="left:232.4rem;top:103.9rem;width:11.3rem;height:8.3rem;background:#edeff1;border:0.2rem solid #d3dbe0;border-radius:1.5rem;"></div>
<span style="left: 234.8rem; top: 106.68rem; font-size: 2.8rem; line-height: 2.8rem; color: rgb(143, 162, 175); font-weight: 400; letter-spacing: -0.013rem;">Copy</span>
<div style="left:96.1rem;top:122.3rem;width:3.2rem;height:3.2rem;border:0.2rem solid #8798a6;border-radius:0.7rem;background:#fff;"></div>
<div style="left:103.3rem;top:119.9rem;width:31.5rem;height:8rem;border:0.2rem solid #2b6cb0;border-radius:0.9rem;background:#fff;"></div>
<span style="left: 104.45rem; top: 122.53rem; font-size: 2.8rem; line-height: 2.8rem; color: rgb(54, 69, 79); font-weight: 400; transform-origin: 0rem 50%; transform: scaleX(0.9777);">Close</span>
<div style="left:111.6rem;top:122.3rem;width:0.2rem;height:3.1rem;background:#222;"></div>
<div style="left:162.15rem;top:122.6rem;width:2.6rem;height:2.6rem;border-radius:50%;border:0.2rem solid #d2d2d2;background:#f4f4f4;"></div>
<div style="left:180.25rem;top:122.6rem;width:2.6rem;height:2.6rem;border-radius:50%;border:0.22rem solid #6e6e6e;background:#fff;"></div>
<div style="left:198.45rem;top:122.6rem;width:2.6rem;height:2.6rem;border-radius:50%;border:0.26rem solid #2f6df2;background:#fff;"></div>
<div style="left:199rem;top:123.15rem;width:1.5rem;height:1.5rem;border-radius:50%;background:#2f6df2;"></div>
<div style="left:232.4rem;top:119.7rem;width:11.3rem;height:8.3rem;background:#edeff1;border:0.2rem solid #d3dbe0;border-radius:1.5rem;"></div>
<span style="left: 234.8rem; top: 122.48rem; font-size: 2.8rem; line-height: 2.8rem; color: rgb(143, 162, 175); font-weight: 400; letter-spacing: -0.013rem;">Copy</span>
<div style="left:91.3rem;top:127.9rem;width:160rem;height:0.2rem;background:#d3dbe0;"></div>
<div style="left:91.3rem;top:128.1rem;width:160rem;height:10rem;background:#fff;"></div>
<div style="left:220.3rem;top:131.5rem;width:15.2rem;height:6.4rem;background:#fff;border:0.2rem solid #8293a0;border-radius:1.2rem;"></div>
<span style="left: 223.5rem; top: 133.23rem; font-size: 2.8rem; line-height: 2.8rem; color: rgb(43, 57, 66); font-weight: 400; letter-spacing: -0.003rem;">Cancel</span>
<div style="left:237.5rem;top:131.5rem;width:10.4rem;height:6.4rem;background:#3070b8;border-radius:1.2rem;"></div>
<span style="left: 240.65rem; top: 133.23rem; font-size: 2.8rem; line-height: 2.8rem; color: rgb(255, 255, 255); font-weight: 400; letter-spacing: 0.053rem;">OK</span>
<div style="left:99.8rem;top:116.5rem;width:38.5rem;height:14.9rem;border:1rem solid #b5182a;"></div>
<svg style="left:140rem;top:103rem;width:44rem;height:30rem;" viewBox="0 0 440 300"><g fill="none" stroke="#b5182a" stroke-width="28" stroke-linecap="round" stroke-linejoin="round"><path d="M403.4 25.1 C334.2 196.7 213.9 221.3 43 209.7"></path><path d="M113.3 138 L43 209.7 L113.9 279.1"></path></g></svg>
</div></body></html>
